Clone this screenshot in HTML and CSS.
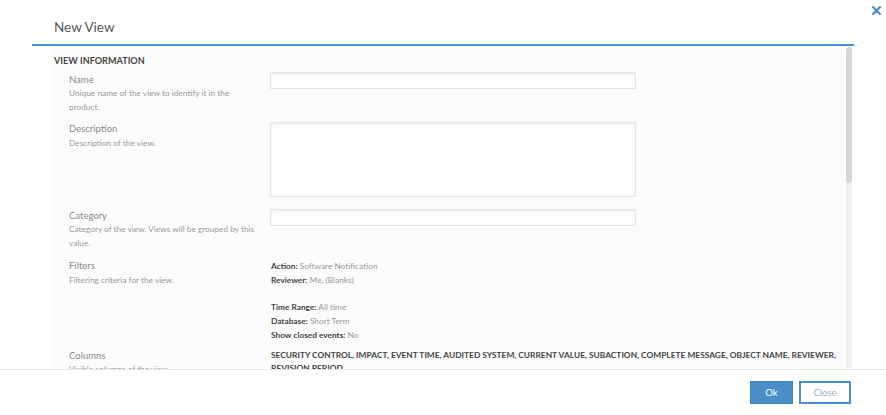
FILE: index.html
```html
<!DOCTYPE html>
<html>
<head>
<meta charset="utf-8">
<link rel="stylesheet" href="styles.css">
</head>
<body>
<div class="modal">
  <button class="close-x" aria-label="Close">
    <svg width="9" height="9" viewBox="0 0 9 9"><path d="M1 1 L8 8 M8 1 L1 8" stroke="#4a8fc7" stroke-width="2.2" stroke-linecap="round"/></svg>
  </button>
  <div class="header"><h1 class="title">New View</h1></div>
  <div class="body">
    <div class="content">
      <div class="section-title">VIEW INFORMATION</div>
      <div class="form">
        <div class="row row-name">
          <div class="label">
            <div class="label-name">Name</div>
            <div class="label-desc">Unique name of the view to identify it in the product.</div>
          </div>
          <div class="field"><div class="input"></div></div>
        </div>
        <div class="row row-desc">
          <div class="label">
            <div class="label-name">Description</div>
            <div class="label-desc">Description of the view.</div>
          </div>
          <div class="field"><div class="input textarea"></div></div>
        </div>
        <div class="row row-cat">
          <div class="label">
            <div class="label-name">Category</div>
            <div class="label-desc">Category of the view. Views will be grouped by this value.</div>
          </div>
          <div class="field"><div class="input"></div></div>
        </div>
        <div class="row row-filters">
          <div class="label">
            <div class="label-name">Filters</div>
            <div class="label-desc">Filtering criteria for the view.</div>
          </div>
          <div class="field info">
            <div class="info-line"><b>Action:</b> Software Notification</div>
            <div class="info-line"><b>Reviewer:</b> Me, (Blanks)</div>
            <div class="spacer"></div>
            <div class="info-line"><b>Time Range:</b> All time</div>
            <div class="info-line"><b>Database:</b> Short Term</div>
            <div class="info-line"><b>Show closed events:</b> No</div>
          </div>
        </div>
        <div class="row row-cols">
          <div class="label">
            <div class="label-name">Columns</div>
            <div class="label-desc">Visible columns of the view.</div>
          </div>
          <div class="field cols">SECURITY CONTROL, IMPACT, EVENT TIME, AUDITED SYSTEM, CURRENT VALUE, SUBACTION, COMPLETE MESSAGE, OBJECT NAME, REVIEWER, REVISION PERIOD</div>
        </div>
      </div>
    </div>
    <div class="scrollbar"><div class="thumb"></div></div>
  </div>
  <div class="footer">
    <button class="btn btn-ok">Ok</button>
    <button class="btn btn-close">Close</button>
  </div>
</div>
</body>
</html>
```
FILE: styles.css
```css
* { box-sizing: border-box; }
html, body { margin: 0; padding: 0; }
body {
  width: 886px;
  height: 415px;
  overflow: hidden;
  background: #ffffff;
  font-family: Lato, "Open Sans", sans-serif;
  color: #999;
}
.modal {
  position: relative;
  width: 886px;
  height: 415px;
  display: flex;
  flex-direction: column;
}
.close-x {
  position: absolute;
  top: 6px;
  right: 5px;
  width: 9px;
  height: 9px;
  padding: 0;
  border: 0;
  background: transparent;
  display: flex;
}
.header {
  margin: 0 32px;
  height: 46px;
  border-bottom: 2px solid #4a90c9;
  padding: 19px 0 0 22px;
}
.title {
  margin: 0;
  font-size: 13.5px;
  line-height: 16px;
  font-weight: 400;
  color: #555;
}
.body {
  margin: 0 32px;
  height: 323px;
  display: flex;
  overflow: hidden;
}
.content {
  flex: 1;
  margin-left: 21px;
  background: #fcfcfc;
  padding: 8px 0 0 1px;
  overflow: hidden;
}
.scrollbar {
  width: 6px;
  margin: 1px 2px 1px 1px;
  background: #f1f1f1;
  border-radius: 3px;
}
.thumb {
  height: 136px;
  background: #d6d6d6;
  border-radius: 3px;
}
.section-title {
  font-size: 9.1px;
  line-height: 14px;
  font-weight: 700;
  color: #444;
  margin-bottom: 4px;
}
.form {
  padding-left: 15px;
}
.row {
  display: grid;
  grid-template-columns: 201px 1fr;
}
.label-name {
  font-size: 9.5px;
  line-height: 14px;
  color: #8a8a8a;
}
.label-desc {
  font-size: 8.3px;
  line-height: 13.5px;
  color: #999;
  max-width: 192px;
}
.input {
  width: 366px;
  height: 17px;
  border: 1px solid #e4e4e4;
  background: #fdfdfd;
  box-shadow: inset 0 1px 3px rgba(0,0,0,0.07);
}
.textarea { height: 75px; margin-bottom: 5px; }
.row-name { margin-bottom: 8px; }
.row-name .label { padding-top: 1px; }
.row-desc { margin-bottom: 7px; }
.row-desc .label-desc { margin-top: 1px; }
.row-cat { margin-bottom: 9px; }
.row-filters { margin-bottom: 7px; }
.row-filters .label-desc { margin-top: 1px; }
.info {
  font-size: 8.3px;
  line-height: 14px;
  color: #999;
  padding-left: 1px;
}
.info b { color: #444; font-weight: 700; }
.spacer { height: 13px; }
.cols {
  font-size: 8.4px;
  line-height: 13px;
  font-weight: 700;
  color: #444;
  padding-left: 1px;
  padding-right: 4px;
}
.footer {
  flex: 1;
  border-top: 1px solid #e6e6e6;
  display: flex;
  justify-content: flex-end;
  align-items: flex-start;
  padding: 11px 35px 0 0;
  gap: 6px;
}
.btn {
  height: 23px;
  font-family: Lato, "Open Sans", sans-serif;
  font-size: 9.5px;
  padding: 0;
  border-radius: 0;
  cursor: pointer;
}
.btn-ok {
  width: 43px;
  background: #4a8fc7;
  border: 1px solid #3f82ba;
  color: #fff;
}
.btn-close {
  width: 52px;
  background: #fff;
  border: 2px solid #4a8fc7;
  color: #9bb1c6;
}
```
